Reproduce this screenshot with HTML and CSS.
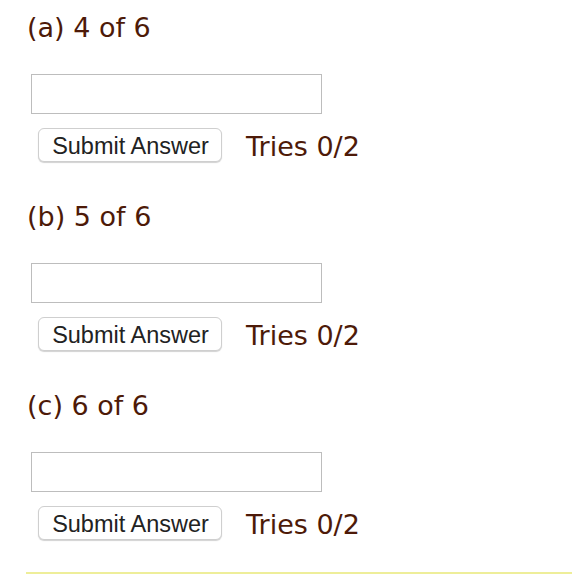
FILE: index.html
```html
<!DOCTYPE html>
<html>
<head>
<meta charset="utf-8">
<link rel="stylesheet" href="styles.css">
</head>
<body>
<div class="problem">
  <div class="part">
    <div class="label">(a) 4 of 6</div>
    <input class="answer" type="text">
    <div class="row">
      <button class="submit">Submit Answer</button>
      <span class="tries">Tries 0/2</span>
    </div>
  </div>
  <div class="part">
    <div class="label">(b) 5 of 6</div>
    <input class="answer" type="text">
    <div class="row">
      <button class="submit">Submit Answer</button>
      <span class="tries">Tries 0/2</span>
    </div>
  </div>
  <div class="part">
    <div class="label">(c) 6 of 6</div>
    <input class="answer" type="text">
    <div class="row">
      <button class="submit">Submit Answer</button>
      <span class="tries">Tries 0/2</span>
    </div>
  </div>
  <div class="rule"></div>
</div>
</body>
</html>
```
FILE: styles.css
```css
html, body {
  margin: 0;
  padding: 0;
  background: #ffffff;
}
body {
  font-family: "DejaVu Sans", Verdana, sans-serif;
  color: #4d1a08;
  overflow: hidden;
}
.problem {
  padding: 11px 0 0 26px;
}
.part {
  display: flex;
  flex-direction: column;
  align-items: flex-start;
  height: 189px;
}
.label {
  font-size: 27px;
  line-height: 34px;
  padding-left: 1px;
}
.answer {
  margin: 29px 0 0 5px;
  width: 291px;
  height: 40px;
  box-sizing: border-box;
  border: 1px solid #bdbdbd;
  border-radius: 0;
  padding: 0 6px;
  font-size: 20px;
  outline: none;
  background: #fff;
}
.row {
  display: flex;
  align-items: flex-start;
  height: 34px;
  margin-top: 14px;
}
.submit {
  margin-left: 12px;
  width: 184px;
  height: 34px;
  box-sizing: border-box;
  border: 1px solid #cfcfcf;
  border-radius: 6px;
  background: #ffffff;
  box-shadow: 0 1px 1px rgba(0, 0, 0, 0.18);
  font-family: "Liberation Sans", Arial, sans-serif;
  font-size: 23.5px;
  color: #222222;
  padding: 2px 0 0 1px;
  line-height: 30px;
}
.tries {
  margin-left: 24px;
  font-size: 27px;
  line-height: 34px;
  padding-top: 2px;
}
.rule {
  margin-top: -6px;
  height: 2px;
  background: #eeee99;
}
```
